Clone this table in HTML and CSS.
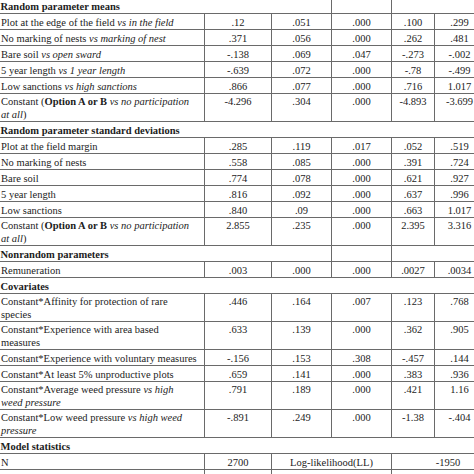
FILE: index.html
```html
<!DOCTYPE html>
<html>
<head>
<meta charset="utf-8">
<link rel="stylesheet" href="styles.css">
</head>
<body>
<table class="results">
  <colgroup>
    <col class="c-label"><col class="c-num"><col class="c-mid"><col class="c-mid"><col class="c-ci"><col class="c-last">
  </colgroup>
  <tbody>
    <tr class="section">
      <td colspan="3">Random parameter means</td><td></td><td colspan="2"></td>
    </tr>
    <tr><td class="label">Plot at the edge of the field <i>vs in the field</i></td><td>.12</td><td>.051</td><td>.000</td><td>.100</td><td>.299</td></tr>
    <tr><td class="label">No marking of nests <i>vs marking of nest</i></td><td>.371</td><td>.056</td><td>.000</td><td>.262</td><td>.481</td></tr>
    <tr><td class="label">Bare soil <i>vs open sward</i></td><td>-.138</td><td>.069</td><td>.047</td><td>-.273</td><td>-.002</td></tr>
    <tr><td class="label">5 year length <i>vs 1 year length</i></td><td>-.639</td><td>.072</td><td>.000</td><td>-.78</td><td>-.499</td></tr>
    <tr><td class="label">Low sanctions <i>vs high sanctions</i></td><td>.866</td><td>.077</td><td>.000</td><td>.716</td><td>1.017</td></tr>
    <tr class="two"><td class="label">Constant (<b>Option A or B</b> <i>vs no participation<br>at all</i>)</td><td>-4.296</td><td>.304</td><td>.000</td><td>-4.893</td><td>-3.699</td></tr>

    <tr class="section"><td colspan="6">Random parameter standard deviations</td></tr>
    <tr><td class="label">Plot at the field margin</td><td>.285</td><td>.119</td><td>.017</td><td>.052</td><td>.519</td></tr>
    <tr><td class="label">No marking of nests</td><td>.558</td><td>.085</td><td>.000</td><td>.391</td><td>.724</td></tr>
    <tr><td class="label">Bare soil</td><td>.774</td><td>.078</td><td>.000</td><td>.621</td><td>.927</td></tr>
    <tr><td class="label">5 year length</td><td>.816</td><td>.092</td><td>.000</td><td>.637</td><td>.996</td></tr>
    <tr><td class="label">Low sanctions</td><td>.840</td><td>.09</td><td>.000</td><td>.663</td><td>1.017</td></tr>
    <tr class="two"><td class="label">Constant (<b>Option A or B</b> <i>vs no participation<br>at all</i>)</td><td>2.855</td><td>.235</td><td>.000</td><td>2.395</td><td>3.316</td></tr>

    <tr class="section">
      <td colspan="3">Nonrandom parameters</td><td></td><td colspan="2"></td>
    </tr>
    <tr><td class="label">Remuneration</td><td>.003</td><td>.000</td><td>.000</td><td>.0027</td><td>.0034</td></tr>

    <tr class="section"><td colspan="6">Covariates</td></tr>
    <tr class="two"><td class="label">Constant*Affinity for protection of rare<br>species</td><td>.446</td><td>.164</td><td>.007</td><td>.123</td><td>.768</td></tr>
    <tr class="two"><td class="label">Constant*Experience with area based<br>measures</td><td>.633</td><td>.139</td><td>.000</td><td>.362</td><td>.905</td></tr>
    <tr><td class="label">Constant*Experience with voluntary measures</td><td>-.156</td><td>.153</td><td>.308</td><td>-.457</td><td>.144</td></tr>
    <tr><td class="label">Constant*At least 5% unproductive plots</td><td>.659</td><td>.141</td><td>.000</td><td>.383</td><td>.936</td></tr>
    <tr class="two"><td class="label">Constant*Average weed pressure <i>vs high<br>weed pressure</i></td><td>.791</td><td>.189</td><td>.000</td><td>.421</td><td>1.16</td></tr>
    <tr class="two"><td class="label">Constant*Low weed pressure <i>vs high weed<br>pressure</i></td><td>-.891</td><td>.249</td><td>.000</td><td>-1.38</td><td>-.404</td></tr>

    <tr class="section"><td colspan="6">Model statistics</td></tr>
    <tr><td class="label">N</td><td>2700</td><td colspan="2">Log-likelihood(LL)</td><td colspan="2" class="shift">-1950</td></tr>
    <tr><td class="label">AIC/N</td><td>1.451</td><td colspan="2">LL(Null model)(LL0)</td><td colspan="2" class="shift">-3401</td></tr>
  </tbody>
</table>
</body>
</html>
```

FILE: styles.css
```css
html, body {
  margin: 0;
  padding: 0;
  background: #ffffff;
  overflow: hidden;
}

.results {
  border-collapse: collapse;
  table-layout: fixed;
  width: 487px;
  margin: -3px 0 0 -3px;
  font-family: "Liberation Serif", "Times New Roman", serif;
  font-size: 10.5px;
  line-height: 13px;
  color: #1c1c1c;
}

.c-label { width: 207px; }
.c-num { width: 67px; }
.c-mid { width: 60px; }
.c-ci { width: 43px; }
.c-last { width: 50px; }

.results td {
  border: 1px solid #6a6a6a;
  padding: 2px 2px 0 2px;
  height: 13px;
  text-align: center;
  vertical-align: top;
  white-space: nowrap;
  overflow: hidden;
}

.results td.label {
  text-align: left;
  padding-left: 3px;
}

.results tr.two td {
  height: 26px;
  padding-top: 1px;
}

.results tr.section td {
  font-weight: bold;
  text-align: left;
  padding-left: 3px;
  border-left: none;
  border-right: none;
}

.results tr.section td + td {
  border-left: 1px solid #6a6a6a;
}

.results td.shift {
  padding-left: 22px;
}
```
